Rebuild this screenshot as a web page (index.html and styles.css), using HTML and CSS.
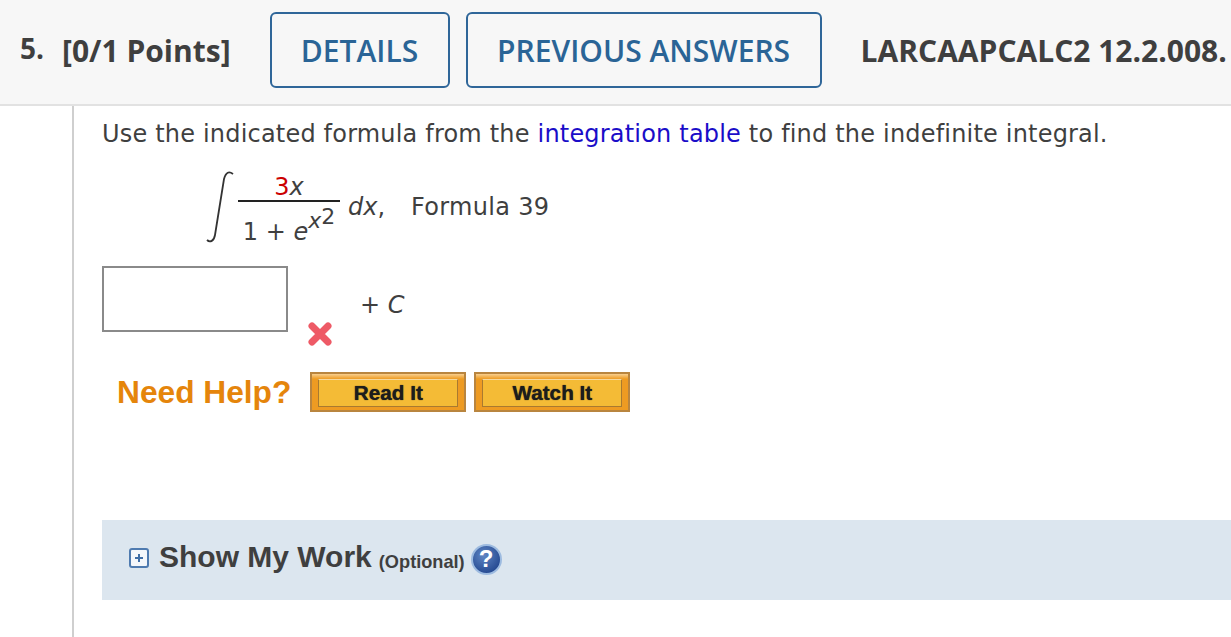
FILE: index.html
```html
<!DOCTYPE html>
<html lang="en">
<head>
    <meta charset="UTF-8">
    <meta name="viewport" content="width=device-width, initial-scale=1.0">
    <title>Question 5</title>
    <link rel="stylesheet" href="styles.css">
</head>
<body>

    <div class="question-header">
        <span class="question-number">5.</span>
        <span class="question-points">[0/1 Points]</span>
        <button type="button" class="outline-btn details-btn">DETAILS</button>
        <button type="button" class="outline-btn previous-btn">PREVIOUS ANSWERS</button>
        <span class="question-code">LARCAAPCALC2 12.2.008.</span>
    </div>

    <div class="question-body">
        <p class="prompt">Use the indicated formula from the <a href="#" class="table-link">integration table</a> to find the indefinite integral.</p>

        <div class="formula-row">
            <svg class="integral" width="36" height="76" viewBox="0 0 36 76">
                <path d="M31 5 C27 2 24 3 22 10 L13 66 C12 72 8 74 5 71" fill="none" stroke="#333" stroke-width="1.8"/>
            </svg>
            <div class="fraction">
                <div class="numerator"><span class="red-num">3</span><i>x</i></div>
                <div class="denominator">1 + <i>e</i><span class="exponent"><i>x</i><span class="exponent-two">2</span></span></div>
            </div>
            <span class="dx"><i>dx</i>,</span>
            <span class="formula-name">Formula 39</span>
        </div>

        <div class="answer-row">
            <input type="text" class="answer-input">
            <svg class="wrong-mark" width="26" height="26" viewBox="0 0 26 26">
                <path d="M5 5 L21 21 M21 5 L5 21" stroke="#ee5a66" stroke-width="7" stroke-linecap="round"/>
            </svg>
            <span class="plus-c">+ <i>C</i></span>
        </div>

        <div class="help-row">
            <span class="need-help">Need Help?</span>
            <button type="button" class="help-btn"><span class="help-btn-face">Read It</span></button>
            <button type="button" class="help-btn"><span class="help-btn-face">Watch It</span></button>
        </div>

        <div class="work-panel">
            <svg class="plus-box" width="20" height="20" viewBox="0 0 20 20">
                <rect x="1" y="1" width="18" height="18" rx="2" fill="#f4f7fb" stroke="#4f7bb0" stroke-width="2"/>
                <path d="M6 10 H14 M10 6 V14" stroke="#3f6ea6" stroke-width="2"/>
            </svg>
            <span class="work-title">Show My Work</span>
            <span class="work-optional">(Optional)</span>
            <span class="help-icon">?</span>
        </div>
    </div>

</body>
</html>
```

FILE: styles.css
```css
html, body { height: 100%; }
body { font-family: "DejaVu Sans", sans-serif; margin: 0; padding: 0; color: #3f3f3f; background: #fff; overflow: hidden; }

.question-header { display: flex; align-items: center; height: 106px; box-sizing: border-box; padding: 0 0 4px 20px; background-color: #f7f7f7; border-bottom: 2px solid #e2e2e2; font-family: "Open Sans", sans-serif; white-space: nowrap; }
.question-number { font-weight: 700; font-size: 28px; margin-top: -4px; margin-right: 18px; }
.question-points { font-weight: 700; font-size: 30px; margin-right: 39px; }
.outline-btn { height: 76px; box-sizing: border-box; background: transparent; border: 2px solid #2f6699; border-radius: 6px; color: #2a6496; font-family: "Open Sans", sans-serif; font-size: 30px; font-weight: 600; padding: 0; }
.details-btn { width: 180px; margin-right: 16px; }
.previous-btn { width: 356px; margin-right: 39px; }
.question-code { font-weight: 700; font-size: 30px; }

.question-body { margin-left: 72px; border-left: 2px solid #cfcfcf; padding-left: 28px; height: 531px; }
.prompt { margin: 0; padding-top: 12px; font-size: 24px; line-height: 32px; letter-spacing: 0.19px; white-space: nowrap; }
.table-link { color: #1a0dc8; text-decoration: none; }

.formula-row { display: flex; align-items: center; height: 88px; margin-top: 13px; padding-left: 100px; font-size: 24px; }
.fraction { display: flex; flex-direction: column; align-items: center; width: 102px; margin-top: -2px; }
.numerator { height: 29px; line-height: 32px; border-bottom: 2px solid #222; width: 100%; text-align: center; }
.red-num { color: #cc0000; }
.denominator { height: 40px; line-height: 61px; white-space: nowrap; }
.exponent { position: relative; top: -12px; font-size: 22px; }
.exponent-two { position: relative; top: -4px; }
.dx { margin-left: 8px; }
.formula-name { margin-left: 26px; letter-spacing: 0.3px; }

.answer-row { display: flex; align-items: flex-start; margin-top: 15px; height: 89px; }
.answer-input { width: 186px; height: 66px; box-sizing: border-box; border: 2px solid #8a8a8a; background: #fff; padding: 0; }
.wrong-mark { margin: 55px 0 0 19px; filter: blur(0.5px); }
.plus-c { margin: 21px 0 0 27px; font-size: 24px; line-height: 36px; }

.help-row { display: flex; align-items: center; height: 40px; margin-top: 17px; padding-left: 15px; }
.need-help { font-family: "Liberation Sans", sans-serif; font-weight: 700; font-size: 31.7px; color: #e5850b; margin-right: 19px; white-space: nowrap; }
.help-btn { display: flex; width: 156px; height: 40px; box-sizing: border-box; margin-right: 8px; padding: 0; background: linear-gradient(#f8cf8e 0, #ee9b22 5px); border: 2px solid #b9853f; font-family: "Liberation Sans", sans-serif; font-weight: 700; font-size: 20.7px; color: #1c1c1c; }
.help-btn-face { flex: 1; margin: 5px 6px 3px; line-height: 26px; background: #f4bb36; border: 1px solid #a97a30; border-top-color: #f5d9a0; text-shadow: 0 0 1px #1c1c1c; }

.work-panel { display: flex; align-items: center; height: 80px; margin-top: 108px; padding-left: 27px; background-color: #dce6ef; white-space: nowrap; font-family: "Liberation Sans", sans-serif; font-weight: 700; }
.plus-box { margin-right: 10px; margin-bottom: 4px; }
.work-title { font-size: 30px; margin-right: 7px; margin-bottom: 6px; }
.work-optional { font-size: 18.2px; margin-top: 4px; margin-right: 6px; }
.help-icon { display: flex; align-items: center; justify-content: center; width: 27px; height: 27px; margin-bottom: 2px; border: 2px solid #9dbbe0; border-radius: 50%; background: radial-gradient(circle at 40% 35%, #5f86c4, #23478f 80%); color: #fff; font-size: 24px; }
```
